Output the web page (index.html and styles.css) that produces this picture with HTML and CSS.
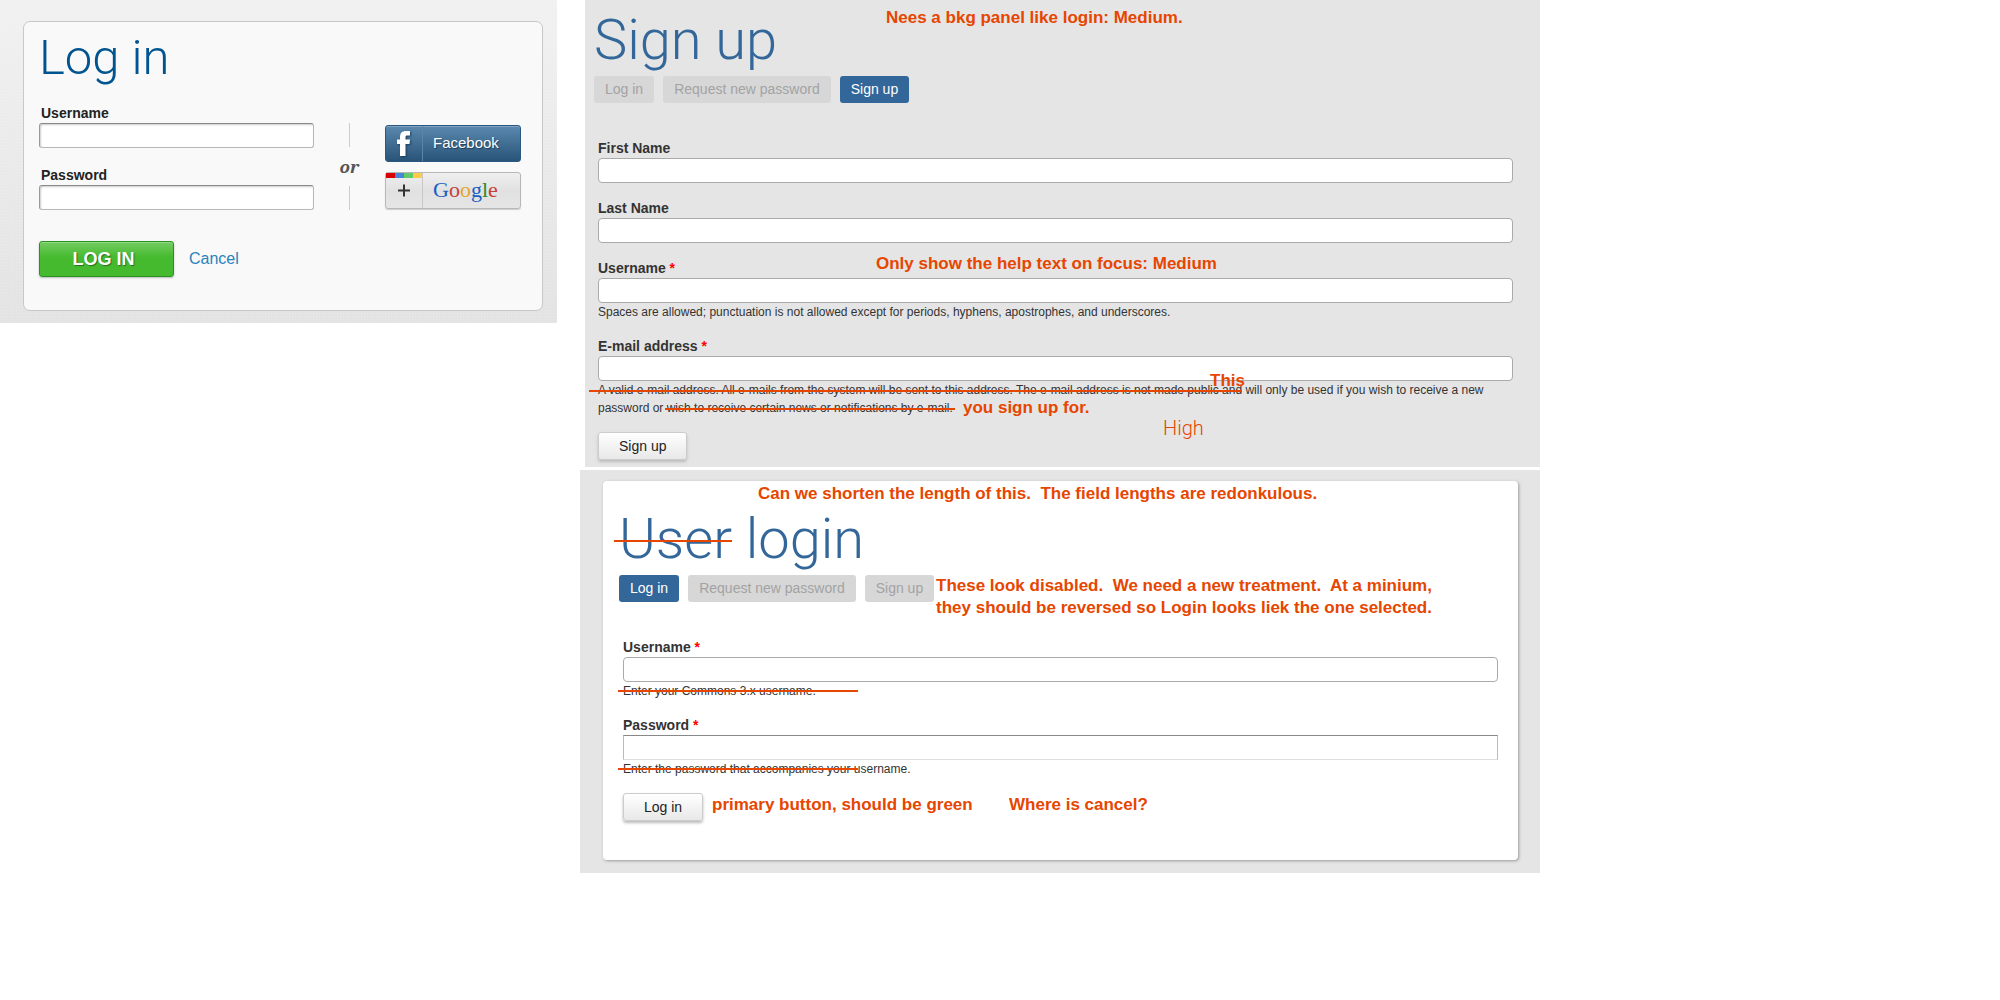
FILE: index.html
```html
<!DOCTYPE html>
<html lang="en">
  <head>
    <meta charset="UTF-8" />
    <title>Login and sign up review</title>
    <link rel="stylesheet" href="styles.css">
  </head>
  <body>
    <div class="board">
      <section class="proposal">
        <form class="login-card">
          <h1>Log in</h1>
          <div class="login-body">
            <div class="login-fields">
              <label for="new-user">Username</label>
              <input type="text" id="new-user" />
              <label for="new-pass">Password</label>
              <input type="password" id="new-pass" />
            </div>
            <div class="divider"><span>or</span></div>
            <div class="social">
              <button type="button" class="social-btn facebook">
                <span class="social-icon">
                  <svg width="14" height="25" viewBox="0 0 14 25">
                    <path d="M3 25V13H0V8.500H3V6C3 2 5 0 9 0H13V4.500H10.500C9 4.500 8.500 5 8.500 6.500V8.500H13L12.500 13H8.500V25Z" fill="#fff" />
                  </svg>
                </span>
                <span class="social-name">Facebook</span>
              </button>
              <button type="button" class="social-btn google">
                <span class="social-icon">
                  <svg width="36" height="35" viewBox="0 0 36 35">
                    <path d="M0 0H9V5H0Z" fill="#d80000" />
                    <path d="M9 0H18V5H9Z" fill="#4a86d8" />
                    <path d="M18 0H27V5H18Z" fill="#5fcc68" />
                    <path d="M27 0H36V5H27Z" fill="#ffc94a" />
                    <path d="M12 17.500H24M18 11.500V23.500" stroke="#333" stroke-width="2" />
                  </svg>
                </span>
                <span class="social-name"><span class="g-blue">G</span><span class="g-red">o</span><span class="g-yellow">o</span><span class="g-blue">g</span><span class="g-green">l</span><span class="g-red">e</span></span>
              </button>
            </div>
          </div>
          <div class="login-actions">
            <button type="submit" class="primary-btn">LOG IN</button>
            <a href="#">Cancel</a>
          </div>
        </form>
      </section>

      <main class="current">
        <section class="signup-page">
          <h2>Sign up</h2>
          <nav class="tabs">
            <a href="#">Log in</a>
            <a href="#">Request new password</a>
            <a href="#" class="active">Sign up</a>
          </nav>
          <form class="fields">
            <div class="field">
              <label for="first">First Name</label>
              <input type="text" id="first" />
            </div>
            <div class="field">
              <label for="last">Last Name</label>
              <input type="text" id="last" />
            </div>
            <div class="field">
              <label for="username">Username <span class="required">*</span></label>
              <input type="text" id="username" />
              <p class="help">Spaces are allowed; punctuation is not allowed except for periods, hyphens, apostrophes, and underscores.</p>
            </div>
            <div class="field">
              <label for="email">E-mail address <span class="required">*</span></label>
              <input type="text" id="email" />
              <p class="help"><span class="struck">A valid e-mail address. All e-mails from the system will be sent to this address. The e-mail address is not made public and</span> will only be used if you wish to receive a new<br />password or <span class="struck tight">wish to receive certain news or notifications by e-mail.</span></p>
            </div>
            <button type="submit" class="btn">Sign up</button>
          </form>
          <p class="note note-panel">Nees a bkg panel like login: Medium.</p>
          <p class="note note-help">Only show the help text on focus: Medium</p>
          <p class="note note-this">This</p>
          <p class="note note-for">you sign up for.</p>
          <p class="note light note-high">High</p>
        </section>

        <section class="login-page">
          <div class="panel">
            <h2><span class="struck">User</span> login</h2>
            <nav class="tabs">
              <a href="#" class="active">Log in</a>
              <a href="#">Request new password</a>
              <a href="#">Sign up</a>
            </nav>
            <form class="fields">
              <div class="field">
                <label for="name">Username <span class="required">*</span></label>
                <input type="text" id="name" />
                <p class="help strike-line">Enter your Commons 3.x username.</p>
              </div>
              <div class="field">
                <label for="pass">Password <span class="required">*</span></label>
                <input type="password" id="pass" />
                <p class="help strike-line">Enter the password that accompanies your username.</p>
              </div>
              <button type="submit" class="btn">Log in</button>
            </form>
          </div>
          <p class="note note-length">Can we shorten the length of this.  The field lengths are redonkulous.</p>
          <p class="note note-tabs">These look disabled.  We need a new treatment.  At a minium,
they should be reversed so Login looks liek the one selected.</p>
          <p class="note note-primary">primary button, should be green</p>
          <p class="note note-cancel">Where is cancel?</p>
        </section>
      </main>
    </div>
  </body>
</html>
```
FILE: styles.css
```css
* {
  box-sizing: border-box;
}
body {
  margin: 0;
  background: #fff;
  color: #333;
  font-family: "Liberation Sans", Arial, sans-serif;
  font-size: 14px;
}
h1,
h2,
p {
  margin: 0;
}
button,
input {
  font-family: inherit;
}
label {
  display: block;
  font-weight: bold;
  line-height: 20px;
}
.board {
  display: flex;
  align-items: flex-start;
  gap: 23px;
}

/* new login design */
.proposal {
  flex: 0 1 557px;
  padding: 21px 14px 12px 23px;
  background: radial-gradient(circle, rgba(255, 255, 255, 0.2) 1px, transparent 1px) 0 0 / 3px 3px,
    linear-gradient(#f1f1f1, #e3e3e3);
}
.login-card {
  padding: 6px 21px 33px 15px;
  background: #f9f9f9;
  border: 1px solid #c8c8c8;
  border-radius: 7px;
}
.login-card h1 {
  margin-bottom: 15px;
  color: #00548f;
  font-family: Roboto, sans-serif;
  font-size: 49px;
  font-weight: 300;
  line-height: 60px;
}
.login-body {
  display: flex;
}
.login-fields {
  flex: 0 1 275px;
}
.login-fields label {
  padding-left: 2px;
  color: #222;
}
.login-fields input {
  display: block;
  width: 100%;
  height: 25px;
  border: 1px solid #b8b8b8;
  border-top-color: #888;
  border-left-color: #999;
  border-radius: 3px;
  background: #fff;
  box-shadow: inset 1px 1px 2px #ccc;
}
.login-fields input + label {
  margin-top: 17px;
}
.divider {
  display: flex;
  flex-direction: column;
  align-items: center;
  width: 71px;
  padding-top: 20px;
  color: #555;
  font-family: "Noto Serif", "Liberation Serif", serif;
  font-size: 17px;
  font-style: italic;
  font-weight: bold;
}
.divider::before,
.divider::after {
  content: "";
  width: 1px;
  height: 24px;
  background: #ccc;
}
.divider span {
  line-height: 39px;
}
.social {
  display: flex;
  flex-direction: column;
  gap: 10px;
  flex: 0 0 136px;
  padding-top: 22px;
}
.social-btn {
  display: flex;
  height: 37px;
  padding: 0;
  border-radius: 3px;
  cursor: pointer;
}
.social-icon {
  display: flex;
  align-items: center;
  justify-content: center;
  width: 37px;
  height: 35px;
}
.social-name {
  padding-left: 10px;
  line-height: 34px;
}
.facebook {
  border: 1px solid #2b5880;
  background: linear-gradient(#5b88ae, #285478);
  box-shadow: inset 0 1px 0 #7fa3c0;
  color: #fff;
  font-size: 15px;
  text-shadow: 1px 1px 1px #1c3d59;
}
.facebook .social-icon {
  border-right: 1px solid #5c84a6;
}
.facebook svg {
  filter: drop-shadow(1px 1px 1px #1c3d59);
}
.google {
  border: 1px solid #b8b8b8;
  background: linear-gradient(#efefef, #e1e1e1 50%, #e5e5e5);
  box-shadow: 0 1px 1px #ccc;
  font-family: "Liberation Serif", serif;
  font-size: 22px;
}
.google .social-icon {
  border-right: 1px solid #c8c8c8;
}
.g-blue {
  color: #1a5fc4;
}
.g-red {
  color: #c5403c;
}
.g-yellow {
  color: #e5a82e;
}
.g-green {
  color: #2c8a2c;
}
.login-actions {
  display: flex;
  align-items: center;
  gap: 15px;
  margin-top: 31px;
}
.primary-btn {
  width: 135px;
  height: 36px;
  border: 1px solid #2a9020;
  border-radius: 3px;
  background: linear-gradient(#74cc62, #45ba2f 45%, #45ba2f);
  box-shadow: inset 0 1px 0 #8fd980, 0 1px 2px #bbb;
  color: #fff;
  font-size: 18px;
  font-weight: bold;
  text-shadow: 1px 1px 1px #2c6b20;
  padding: 0 6px 0 0;
  cursor: pointer;
}
.login-actions a {
  color: #2a82be;
  font-size: 16px;
  text-decoration: none;
}

/* current pages */
.current {
  flex: 0 1 960px;
}
.signup-page,
.login-page {
  position: relative;
  background: #e5e5e5;
}
.signup-page {
  margin: 0 0 3px 5px;
  padding: 0 27px 7px 9px;
}
.login-page {
  padding: 11px 22px 13px 23px;
}
.panel {
  padding: 18px 20px 39px 16px;
  background: #fff;
  border-radius: 4px;
  box-shadow: 1px 1px 3px #999;
}
h2 {
  padding-top: 4px;
  color: #336699;
  font-family: Roboto, sans-serif;
  font-size: 56px;
  font-weight: 300;
  line-height: 72px;
}
.tabs {
  display: flex;
  gap: 9px;
}
.tabs a {
  padding: 0 11px;
  border-radius: 3px;
  background: #d7d7d7;
  color: #a3a3a3;
  line-height: 27px;
  text-decoration: none;
}
.tabs .active {
  background: #336699;
  color: #fff;
}
.fields {
  padding: 35px 0 0 4px;
}
.field {
  margin-bottom: 15px;
}
.field input {
  display: block;
  width: 100%;
  height: 25px;
  border: 1px solid #aaa;
  border-radius: 4px;
  background: #fff;
}
.field input[type="password"] {
  border-color: #888 #bbb #ddd;
  border-radius: 0;
}
.required {
  color: #f00;
}
.help {
  font-size: 12px;
  line-height: 18px;
}
.btn {
  height: 28px;
  padding: 0 20px;
  border: 1px solid #ccc;
  border-radius: 3px;
  background: linear-gradient(#fff, #e8e8e8);
  box-shadow: 0 2px 3px #bbb;
  color: #222;
  font-size: 14px;
  cursor: pointer;
}

/* review marks */
.struck,
.strike-line {
  position: relative;
}
.struck::after,
.strike-line::after {
  content: "";
  position: absolute;
  top: 7px;
  left: -9px;
  right: 0;
  height: 2px;
  background: #e64600;
}
.tight::after {
  left: -2px;
  right: -2px;
}
h2 .struck::after {
  top: 34px;
  left: -5px;
}
.strike-line::after {
  top: 8px;
  left: -5px;
  right: auto;
  width: 240px;
}
.note {
  position: absolute;
  color: #e64600;
  font-size: 17px;
  font-weight: bold;
  line-height: 22px;
  white-space: pre;
}
.light {
  font-family: Roboto, sans-serif;
  font-size: 20px;
  font-weight: 300;
}
.note-panel {
  top: 7px;
  left: 301px;
}
.note-help {
  top: 253px;
  left: 291px;
}
.note-this {
  top: 370px;
  left: 625px;
}
.note-for {
  top: 397px;
  left: 378px;
}
.note-high {
  top: 417px;
  left: 578px;
}
.note-length {
  top: 13px;
  left: 178px;
}
.note-tabs {
  top: 105px;
  left: 356px;
}
.note-primary {
  top: 324px;
  left: 132px;
}
.note-cancel {
  top: 324px;
  left: 429px;
}
```
